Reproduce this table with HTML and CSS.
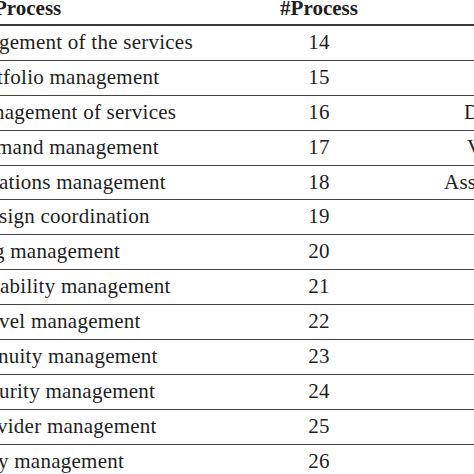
FILE: index.html
```html
<!DOCTYPE html>
<html lang="en">
<head>
<meta charset="utf-8">
<title>Processes</title>
<link rel="stylesheet" href="styles.css">
</head>
<body>
<div class="table">
  <div class="row head">
    <div class="name"><span class="o-p">Process</span></div>
    <div class="num">#Process</div>
    <div class="extra"></div>
  </div>
  <div class="row">
    <div class="name"><span class="o1">gement of the services</span></div>
    <div class="num">14</div>
    <div class="extra"></div>
  </div>
  <div class="row">
    <div class="name"><span class="o3">tfolio management</span></div>
    <div class="num">15</div>
    <div class="extra"></div>
  </div>
  <div class="row">
    <div class="name"><span class="o6">nagement of services</span></div>
    <div class="num">16</div>
    <div class="extra"><span class="e-d">Deployment management</span></div>
  </div>
  <div class="row">
    <div class="name"><span class="o4">mand management</span></div>
    <div class="num">17</div>
    <div class="extra"><span class="e-v">Validation and testing</span></div>
  </div>
  <div class="row">
    <div class="name"><span class="o1">ations management</span></div>
    <div class="num">18</div>
    <div class="extra"><span class="e-a">Asset management</span></div>
  </div>
  <div class="row">
    <div class="name"><span class="o1">sign coordination</span></div>
    <div class="num">19</div>
    <div class="extra"></div>
  </div>
  <div class="row">
    <div class="name"><span class="o6">g management</span></div>
    <div class="num">20</div>
    <div class="extra"></div>
  </div>
  <div class="row">
    <div class="name"><span class="o0">ability management</span></div>
    <div class="num">21</div>
    <div class="extra"></div>
  </div>
  <div class="row">
    <div class="name"><span class="o1">vel management</span></div>
    <div class="num">22</div>
    <div class="extra"></div>
  </div>
  <div class="row">
    <div class="name"><span class="o2">nuity management</span></div>
    <div class="num">23</div>
    <div class="extra"></div>
  </div>
  <div class="row">
    <div class="name"><span class="o1">urity management</span></div>
    <div class="num">24</div>
    <div class="extra"></div>
  </div>
  <div class="row">
    <div class="name"><span class="o3">vider management</span></div>
    <div class="num">25</div>
    <div class="extra"></div>
  </div>
  <div class="row">
    <div class="name"><span class="o2">y management</span></div>
    <div class="num">26</div>
    <div class="extra"></div>
  </div>
</div>
</body>
</html>
```

FILE: styles.css
```css
html, body {
  margin: 0;
  padding: 0;
  background: #ffffff;
}

body {
  width: 474px;
  height: 474px;
  overflow: hidden;
  font-family: "Liberation Serif", "DejaVu Serif", serif;
  font-size: 21px;
  letter-spacing: 0.25px;
  color: #1e1e1e;
}

.table {
  display: flex;
  flex-direction: column;
}

.row {
  display: grid;
  grid-template-columns: 260px 118px 1fr;
  height: 34.9px;
  box-sizing: border-box;
  border-bottom: 1.6px solid #444444;
  line-height: 33px;
  white-space: nowrap;
}

.row.head {
  height: 26px;
  padding-bottom: 9px;
  line-height: 17px;
  border-bottom: 2px solid #3a3a3a;
  font-weight: bold;
  letter-spacing: 0;
}

.name,
.extra {
  text-align: left;
}

.num {
  text-align: center;
}

.o-p { margin-left: -6px; }
.o0 { margin-left: 0; }
.o1 { margin-left: -1px; }
.o2 { margin-left: -2px; }
.o3 { margin-left: -3px; }
.o4 { margin-left: -4px; }
.o6 { margin-left: -6px; }

.extra span { display: inline-block; }
.e-d { margin-left: 86px; }
.e-v { margin-left: 89px; }
.e-a { margin-left: 66px; }
```
